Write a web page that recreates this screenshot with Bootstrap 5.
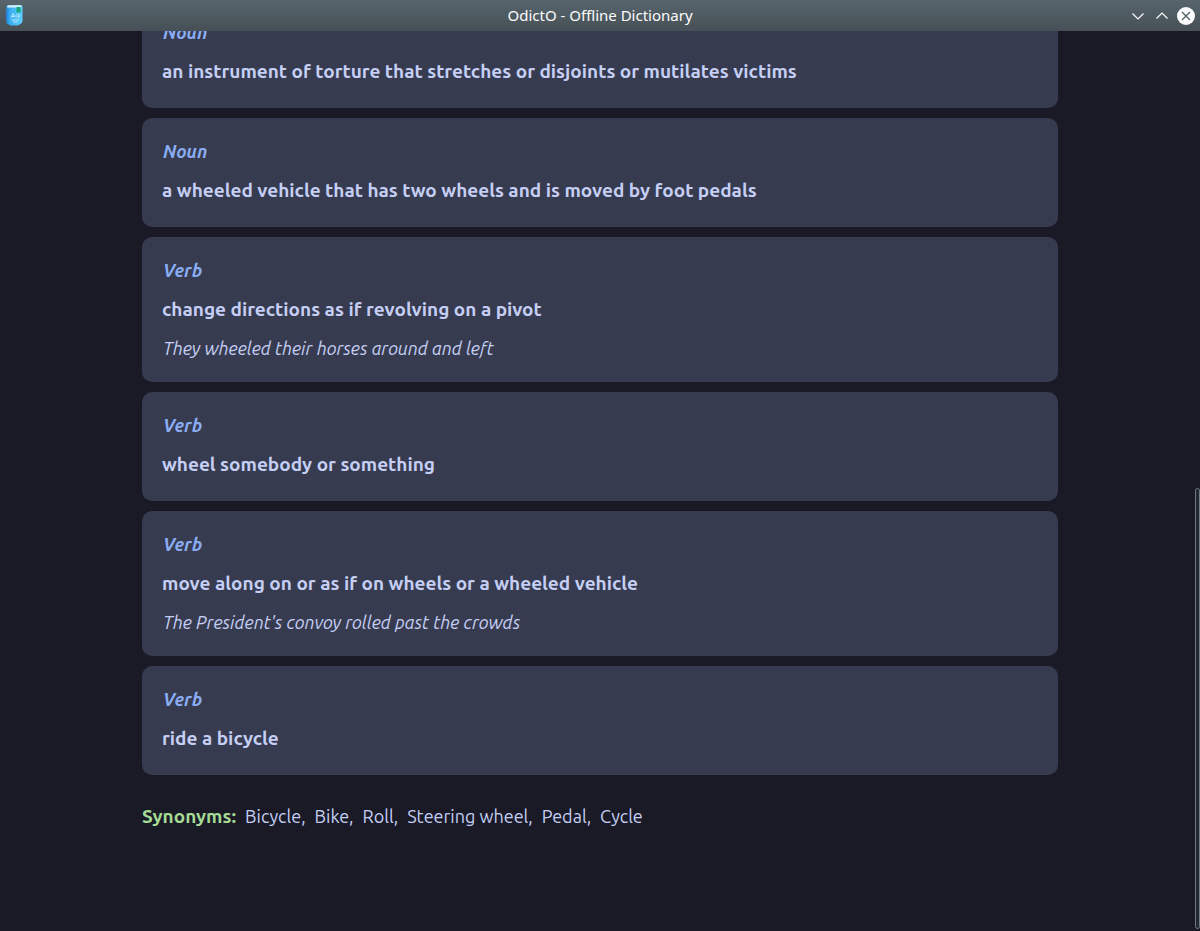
<!DOCTYPE html>
<html lang="en">
<head>
<meta charset="utf-8">
<meta name="viewport" content="width=device-width, initial-scale=1">
<title>OdictO - Offline Dictionary</title>
<link href="https://cdn.jsdelivr.net/npm/bootstrap@5.3.0/dist/css/bootstrap.min.css" rel="stylesheet">
<style>
  body { background: #191a26; color: #c5cff5; font: 18px/27px Ubuntu, "Noto Sans", sans-serif; }
  .titlebar { height: 31px; padding: 0 5px; background: linear-gradient(#58656d, #465056); color: #fcfcfc; font: 15px/31px "Noto Sans", sans-serif; }
  .side { width: 72px; }
  .win-buttons { gap: 6px; }
  .win-btn { width: 18px; height: 18px; color: inherit; }
  .viewer { min-height: 0; overflow-y: auto; scrollbar-width: none; }
  .viewer::-webkit-scrollbar { display: none; }
  .page { width: 100%; max-width: 916px; padding-bottom: 101px; }
  .entry { background: #373b4f; border-radius: 10px; padding: 20px; margin-bottom: 10px; }
  .pos { color: #8aadf4; font-size: 18px; line-height: 27px; font-weight: 700; margin-bottom: 12px; }
  .def { font-size: 19px; font-weight: 700; margin-bottom: 3px; }
  .example { margin: 12px 0 0; }
  .pos, .example { padding-left: 1px; }
  .synonyms { margin-top: 28px; column-gap: 9px; }
  .synonyms a { color: inherit; }
  .syn-label { color: #a6da95; font-size: 19px; line-height: 27px; font-weight: 700; }
  .thumb { width: 5px; height: 49%; bottom: 2px; background: #202a35; border: 1px solid #74797f; border-radius: 3px; }
</style>
</head>
<body class="vh-100 d-flex flex-column overflow-hidden">
<header class="titlebar d-flex align-items-center justify-content-between flex-shrink-0">
  <div class="side d-flex">
    <svg width="18" height="22" viewBox="0 0 18 22" aria-hidden="true">
      <defs><linearGradient id="cover"><stop offset="0" stop-color="#2fa4f0"/><stop offset="1" stop-color="#5fd0fb"/></linearGradient></defs>
      <circle cx="9" cy="10.500" r="9" fill="#3e5a9c"/>
      <path d="M1.500 2Q1.500 0 4 0H16Q17.500 0 17.500 2V16Q17 19 12 20.500H6Q1.500 19 1.500 17Z" fill="url(#cover)"/>
      <path d="M2 2Q2 .3 4 .3H16.500L16 2.500H3Z" fill="#d5edfc"/>
      <path d="M2 3H3.500V18.500Q2 18 2 17Z" fill="#2490e2"/>
      <path d="M11.500 2H15.500V8L13.500 7L11.500 8Z" fill="#12a87c"/>
      <path d="M6 12.500L8 8.500L10 12.500M7 11.500H9.500M14 9.500V12.500M14 11a1.500 1.500 0 1 1 0-.5M6.500 15H14M8 17H12.500" fill="none" stroke="#b6e6fd"/>
    </svg>
  </div>
  <span>OdictO - Offline Dictionary</span>
  <div class="side win-buttons d-flex justify-content-end">
    <button type="button" class="win-btn btn p-0 border-0 d-flex" aria-label="Minimize"><svg width="18" height="18" viewBox="0 0 18 18" fill="none" stroke="#fcfcfc" stroke-width="1.200"><path d="M3.500 6.500L9 12L14.500 6.500"/></svg></button>
    <button type="button" class="win-btn btn p-0 border-0 d-flex" aria-label="Maximize"><svg width="18" height="18" viewBox="0 0 18 18" fill="none" stroke="#fcfcfc" stroke-width="1.200"><path d="M3.500 11.500L9 6L14.500 11.500"/></svg></button>
    <button type="button" class="win-btn btn p-0 border-0 d-flex" aria-label="Close"><svg width="18" height="18" viewBox="0 0 18 18"><circle cx="9" cy="9" r="9" fill="#fcfcfc"/><path d="M5 5L13 13M13 5L5 13" stroke="#4f5b62" stroke-width="1.200"/></svg></button>
  </div>
</header>
<div class="position-relative d-flex flex-column flex-grow-1 overflow-hidden">
  <div class="viewer d-flex flex-column-reverse flex-grow-1">
    <main class="page mx-auto flex-shrink-0">
      <article class="entry"><h2 class="pos fst-italic">Noun</h2><p class="def">an instrument of torture that stretches or disjoints or mutilates victims</p></article>
      <article class="entry"><h2 class="pos fst-italic">Noun</h2><p class="def">a wheeled vehicle that has two wheels and is moved by foot pedals</p></article>
      <article class="entry"><h2 class="pos fst-italic">Verb</h2><p class="def">change directions as if revolving on a pivot</p><p class="example fst-italic">They wheeled their horses around and left</p></article>
      <article class="entry"><h2 class="pos fst-italic">Verb</h2><p class="def">wheel somebody or something</p></article>
      <article class="entry"><h2 class="pos fst-italic">Verb</h2><p class="def">move along on or as if on wheels or a wheeled vehicle</p><p class="example fst-italic">The President's convoy rolled past the crowds</p></article>
      <article class="entry"><h2 class="pos fst-italic">Verb</h2><p class="def">ride a bicycle</p></article>
      <div class="synonyms d-flex flex-wrap">
        <h3 class="syn-label mb-0">Synonyms:</h3>
        <a href="#" class="text-decoration-none">Bicycle,</a>
        <a href="#" class="text-decoration-none">Bike,</a>
        <a href="#" class="text-decoration-none">Roll,</a>
        <a href="#" class="text-decoration-none">Steering wheel,</a>
        <a href="#" class="text-decoration-none">Pedal,</a>
        <a href="#" class="text-decoration-none">Cycle</a>
      </div>
    </main>
  </div>
  <div class="thumb position-absolute end-0"></div>
</div>
<script src="https://cdn.jsdelivr.net/npm/bootstrap@5.3.0/dist/js/bootstrap.bundle.min.js"></script>
</body>
</html>
